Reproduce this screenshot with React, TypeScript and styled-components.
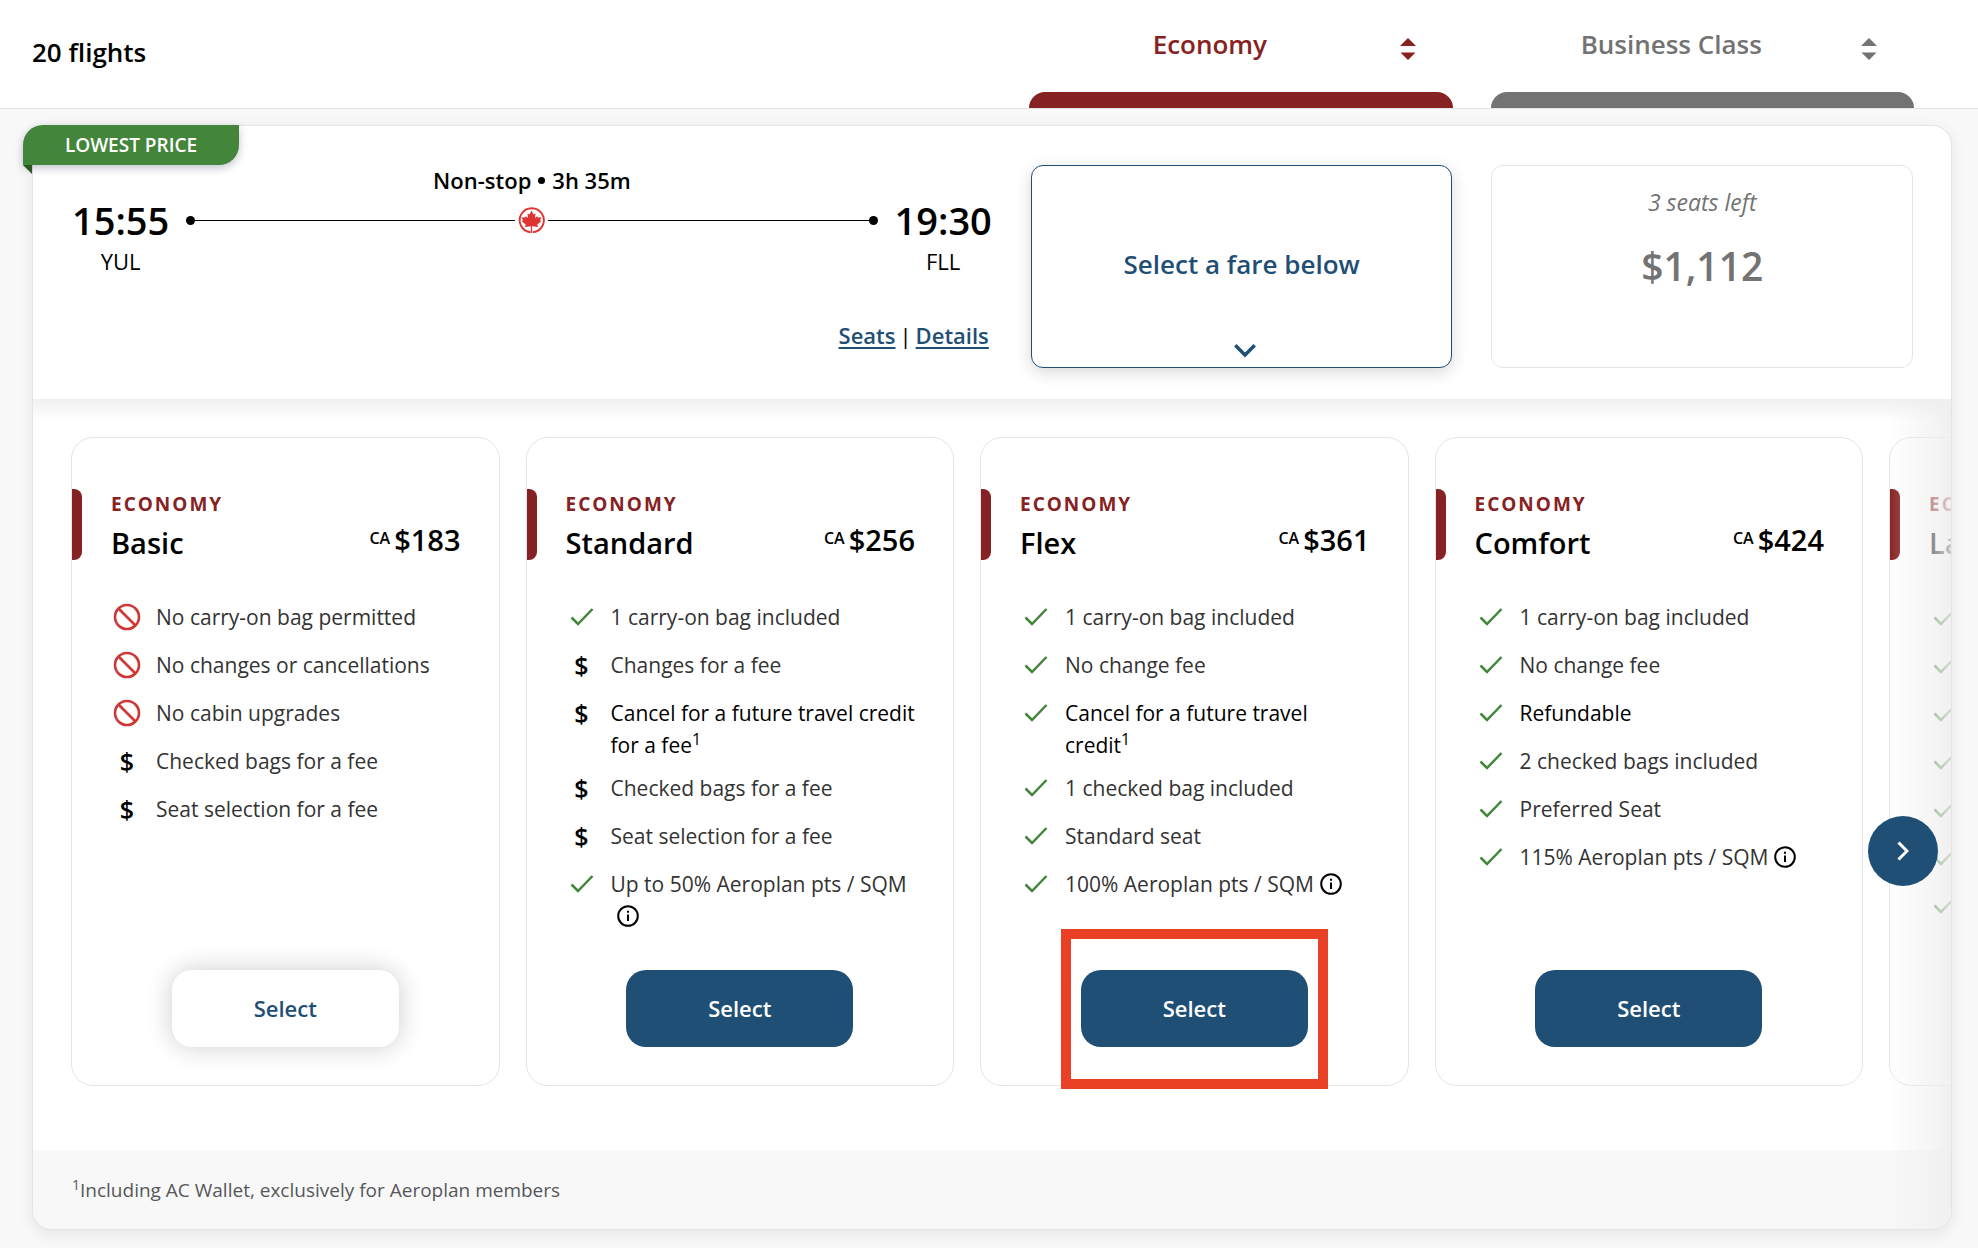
import React from "react";
import styled, { createGlobalStyle } from "styled-components";

const colors = {
  maroon: "#862223",
  navy: "#1f4f75",
  grey: "#737373",
  line: "#e4e4e4",
  page: "#f8f8f8",
  green: "#43853b",
};

const GlobalStyle = createGlobalStyle`
  *, *::before, *::after { box-sizing: border-box; }
  body {
    margin: 0;
    background: ${colors.page};
    color: #000;
    font-family: "Open Sans", "Noto Sans", sans-serif;
    font-size: 21px;
    overflow-x: hidden;
  }
  button { font: inherit; color: inherit; background: none; border: 0; padding: 0; cursor: pointer; }
  h1, h2, p, ul { margin: 0; padding: 0; }
  ul { list-style: none; }
`;

const Header = styled.header`
  display: flex;
  align-items: stretch;
  gap: 38px;
  height: 109px;
  padding: 0 64px 0 32px;
  background: #fff;
  border-bottom: 1px solid ${colors.line};
`;

const Count = styled.h1`
  flex: 1;
  padding-top: 34px;
  font-size: 26px;
  line-height: 36px;
  font-weight: 600;
`;

const CabinTab = styled.button<{ $color: string }>`
  flex: 0 0 22.5%;
  display: flex;
  flex-direction: column;
  justify-content: space-between;
  color: ${(p) => p.$color};

  &::after {
    content: "";
    width: 100%;
    height: 16px;
    border-radius: 16px 16px 0 0;
    background: ${(p) => p.$color};
  }
`;

const TabLabel = styled.span`
  display: flex;
  align-items: center;
  width: 100%;
  padding: 26px 37px 0 0;
  font-size: 26px;
  line-height: 36px;
  font-weight: 600;

  span { flex: 1; text-align: center; padding-right: 9px; }
  svg { margin: 9px 0 0; }
`;

const Panel = styled.section`
  margin: 16px 26px 17px 32px;
  border: 1px solid ${colors.line};
  border-radius: 20px;
  background: #fff;
  box-shadow: 0 4px 16px rgba(0, 0, 0, 0.08);
  position: relative;
`;

const Badge = styled.div`
  position: absolute;
  top: -1px;
  left: -10px;
  width: 216px;
  height: 40px;
  border-radius: 20px 0 20px 0;
  background: ${colors.green};
  color: #fff;
  font-size: 19px;
  line-height: 40px;
  font-weight: 600;
  text-align: center;
  box-shadow: 0 3px 8px rgba(0, 20, 60, 0.25);

  &::after {
    content: "";
    position: absolute;
    left: 0;
    top: 100%;
    border-style: solid;
    border-width: 0 9px 9px 0;
    border-color: transparent #27591f transparent transparent;
  }
`;

const Summary = styled.div`
  display: flex;
  gap: 39px;
  padding: 39px 38px 31px 39px;
`;

const Flight = styled.div`
  flex: 1;
  display: flex;
  flex-direction: column;
  justify-content: space-between;
`;

const Route = styled.div`
  display: flex;
  justify-content: space-between;
  gap: 17px;
`;

const Stop = styled.div`
  padding-top: 29px;
  text-align: center;
`;

const Time = styled.div`
  font-size: 38px;
  line-height: 52px;
  font-weight: 600;
`;

const Airport = styled.div`
  font-size: 22px;
  line-height: 30px;
`;

const Journey = styled.div`
  flex: 1;
`;

const Duration = styled.div`
  display: flex;
  align-items: center;
  justify-content: center;
  gap: 7px;
  font-size: 22px;
  line-height: 30px;
  font-weight: 600;
`;

const Dot = styled.i<{ $size: number }>`
  width: ${(p) => p.$size}px;
  height: ${(p) => p.$size}px;
  border-radius: 50%;
  background: #000;
`;

const Track = styled.div`
  display: flex;
  align-items: center;
  margin-top: 12px;
`;

const Rule = styled.i`
  flex: 1;
  height: 1px;
  background: #000;
`;

const Logo = styled.svg`
  margin: 0 3px;
`;

const Links = styled.div`
  display: flex;
  gap: 4px;
  align-self: flex-end;
  padding: 0 3px 17px 0;
  font-size: 22px;
  line-height: 32px;

  a {
    color: ${colors.navy};
    font-weight: 600;
    text-underline-offset: 3px;
    text-decoration-thickness: 2px;
  }
`;

const FareCell = styled.button<{ $active?: boolean }>`
  flex: 0 0 22.9%;
  height: 203px;
  display: flex;
  flex-direction: column;
  align-items: center;
  border: 1px solid ${(p) => (p.$active ? colors.navy : colors.line)};
  border-radius: 12px;
  color: ${(p) => (p.$active ? colors.navy : colors.grey)};
  background: #fff;
  box-shadow: ${(p) => (p.$active ? "0 4px 16px rgba(0, 0, 0, 0.16)" : "none")};
`;

const FarePrompt = styled.span`
  padding-top: 80px;
  font-size: 26px;
  line-height: 36px;
  font-weight: 600;
`;

const FareChevron = styled.svg`
  margin: auto 0 9px 6px;
`;

const SeatsLeft = styled.span`
  padding-top: 20px;
  font-size: 23px;
  line-height: 32px;
  font-style: italic;
`;

const CabinPrice = styled.span`
  padding-top: 22px;
  font-size: 39px;
  line-height: 52px;
  font-weight: 600;
`;

const Fares = styled.div`
  position: relative;
  border-radius: 0 0 20px 20px;
  overflow: hidden;
`;

const Cards = styled.div`
  display: flex;
  gap: 26px;
  padding: 38px 62px 64px 38px;
  background: linear-gradient(#f0f0f0, #fff 22px);
`;

const Card = styled.article`
  flex: 0 0 calc((100% - 104px) / 4);
  display: flex;
  flex-direction: column;
  height: 649px;
  padding: 51px 0 38px;
  border: 1px solid ${colors.line};
  border-radius: 22px;
  background: #fff;
`;

const CardHead = styled.header`
  display: flex;
  height: 71px;
  padding-right: 38px;

  &::before {
    content: "";
    align-self: stretch;
    width: 10px;
    margin-right: 29px;
    border-radius: 0 8px 8px 0;
    background: ${colors.maroon};
  }
`;

const FareName = styled.div`
  flex: 1;
`;

const Cabin = styled.p`
  font-size: 19px;
  line-height: 30px;
  font-weight: 700;
  letter-spacing: 2px;
  color: ${colors.maroon};
`;

const Fare = styled.h2`
  padding-top: 4px;
  font-size: 29px;
  line-height: 40px;
  font-weight: 600;
`;

const Price = styled.div`
  display: flex;
  align-items: flex-start;
  gap: 4px;
  padding-top: 30px;
  font-size: 29px;
  line-height: 42px;
  font-weight: 600;

  small { font-size: 16px; line-height: 38px; }
`;

const Features = styled.ul`
  display: flex;
  flex-direction: column;
  gap: 11px;
  padding: 41px 35px 0 40px;
`;

const Feature = styled.li<{ $strong?: boolean }>`
  display: grid;
  grid-template-columns: 30px 1fr;
  column-gap: 14px;
  min-height: 37px;
  line-height: 32px;
  color: ${(p) => (p.$strong ? "#000" : "#333")};

  sup { font-size: 16px; line-height: 0; vertical-align: 8px; }
`;

const Mark = styled.span`
  display: flex;
  align-items: center;
  justify-content: center;
  height: 31px;
  font-size: 25px;
  font-weight: 600;
  color: #000;
`;

const InfoButton = styled.button`
  display: inline-flex;
  margin-left: 6px;
  vertical-align: -3px;
  color: #000;
`;

const Action = styled.div`
  position: relative;
  align-self: center;
  margin-top: auto;
`;

const SelectButton = styled.button<{ $plain?: boolean }>`
  display: block;
  width: 227px;
  height: 77px;
  padding-bottom: 2px;
  border-radius: 20px;
  font-size: 22px;
  font-weight: 600;
  background: ${(p) => (p.$plain ? "#fff" : colors.navy)};
  color: ${(p) => (p.$plain ? colors.navy : "#fff")};
  box-shadow: ${(p) => (p.$plain ? "0 0 26px rgba(0, 0, 0, 0.2)" : "none")};
`;

const Highlight = styled.span`
  position: absolute;
  inset: -41px -20px -42px;
  border: 10px solid #ea4025;
  pointer-events: none;
`;

const Footnote = styled.footer`
  height: 79px;
  padding: 24px 39px;
  background: ${colors.page};
  color: #55575b;
  font-size: 19px;
  line-height: 32px;

  sup { font-size: 14px; line-height: 0; }
`;

const EdgeFade = styled.div`
  position: absolute;
  inset: 0 0 0 auto;
  width: 62px;
  background: linear-gradient(to right, rgba(238, 238, 238, 0), rgba(238, 238, 238, 0.84));
  pointer-events: none;
`;

const NextButton = styled.button`
  position: absolute;
  right: 13px;
  top: 417px;
  width: 70px;
  height: 70px;
  display: grid;
  place-items: center;
  border-radius: 50%;
  background: ${colors.navy};
`;

const SortIcon = () => (
  <svg width="16" height="22" viewBox="0 0 16 22" fill="currentColor" aria-hidden="true">
    <path d="M8 0l8 8H0zM8 22l-7.500-7.500h15z" />
  </svg>
);

const Check = () => (
  <svg width="24" height="20" viewBox="0 0 24 20" fill="none" stroke={colors.green} strokeWidth="2.500" aria-hidden="true">
    <path d="M1.500 10.500l6.500 6.500L22.500 2" />
  </svg>
);

const Prohibited = () => (
  <svg width="28" height="28" viewBox="0 0 28 28" fill="none" stroke="#cd3936" strokeWidth="2.600" aria-hidden="true">
    <circle cx="14" cy="14" r="12" />
    <path d="M5.500 5.500l17 17" />
  </svg>
);

const Info = () => (
  <svg width="22" height="22" viewBox="0 0 22 22" fill="none" stroke="currentColor" strokeWidth="2" aria-hidden="true">
    <circle cx="11" cy="11" r="9.800" />
    <path d="M11 9.500v6.500M11 5.800v2" />
  </svg>
);

type Kind = "no" | "fee" | "yes";
interface Item {
  kind: Kind;
  text: string;
  strong?: boolean;
  note?: boolean;
  info?: boolean;
}

const marks: Record<Kind, React.ReactNode> = { no: <Prohibited />, fee: "$", yes: <Check /> };

const fares: { name: string; price: string; plain?: boolean; marked?: boolean; items: Item[] }[] = [
  {
    name: "Basic",
    price: "$183",
    plain: true,
    items: [
      { kind: "no", text: "No carry-on bag permitted" },
      { kind: "no", text: "No changes or cancellations" },
      { kind: "no", text: "No cabin upgrades" },
      { kind: "fee", text: "Checked bags for a fee" },
      { kind: "fee", text: "Seat selection for a fee" },
    ],
  },
  {
    name: "Standard",
    price: "$256",
    items: [
      { kind: "yes", text: "1 carry-on bag included" },
      { kind: "fee", text: "Changes for a fee" },
      { kind: "fee", text: "Cancel for a future travel credit for a fee", strong: true, note: true },
      { kind: "fee", text: "Checked bags for a fee" },
      { kind: "fee", text: "Seat selection for a fee" },
      { kind: "yes", text: "Up to 50% Aeroplan pts / SQM", info: true },
    ],
  },
  {
    name: "Flex",
    price: "$361",
    marked: true,
    items: [
      { kind: "yes", text: "1 carry-on bag included" },
      { kind: "yes", text: "No change fee" },
      { kind: "yes", text: "Cancel for a future travel credit", strong: true, note: true },
      { kind: "yes", text: "1 checked bag included" },
      { kind: "yes", text: "Standard seat" },
      { kind: "yes", text: "100% Aeroplan pts / SQM", info: true },
    ],
  },
  {
    name: "Comfort",
    price: "$424",
    items: [
      { kind: "yes", text: "1 carry-on bag included" },
      { kind: "yes", text: "No change fee" },
      { kind: "yes", text: "Refundable", strong: true },
      { kind: "yes", text: "2 checked bags included" },
      { kind: "yes", text: "Preferred Seat" },
      { kind: "yes", text: "115% Aeroplan pts / SQM", info: true },
    ],
  },
  {
    name: "La",
    price: "",
    items: Array.from({ length: 7 }, () => ({ kind: "yes" as Kind, text: "" })),
  },
];

export default function App() {
  return (
    <>
      <GlobalStyle />
      <Header>
        <Count>20 flights</Count>
        <CabinTab $color={colors.maroon}>
          <TabLabel>
            <span>Economy</span>
            <SortIcon />
          </TabLabel>
        </CabinTab>
        <CabinTab $color={colors.grey}>
          <TabLabel>
            <span>Business Class</span>
            <SortIcon />
          </TabLabel>
        </CabinTab>
      </Header>
      <Panel>
        <Badge>LOWEST PRICE</Badge>
        <Summary>
          <Flight>
            <Route>
              <Stop>
                <Time>15:55</Time>
                <Airport>YUL</Airport>
              </Stop>
              <Journey>
                <Duration>
                  Non-stop <Dot $size={7} /> 3h 35m
                </Duration>
                <Track>
                  <Dot $size={9} />
                  <Rule />
                  <Logo width="27" height="27" viewBox="0 0 26 26" aria-label="Air Canada">
                    <path d="M12 24.300A11.600 11.600 0 1 1 14.500 24.300" fill="none" stroke="#e03432" strokeWidth="1.800" />
                    <path
                      d="M13 3.300l2 3.900 1.900-.9-.5 4.200 1.900-1.700.8 1.400 3.400-.4-1.200 2.900 1.100 1.100-3.800 3 .7 2.500-5.800-.7.300 6.400h-1.600l.3-6.400-5.800.7.700-2.500-3.800-3 1.100-1.100-1.200-2.900 3.400.4.8-1.400 1.900 1.700-.5-4.200 1.900.9z"
                      fill="#e03432"
                    />
                  </Logo>
                  <Rule />
                  <Dot $size={9} />
                </Track>
              </Journey>
              <Stop>
                <Time>19:30</Time>
                <Airport>FLL</Airport>
              </Stop>
            </Route>
            <Links>
              <a href="#seats">Seats</a>
              <span>|</span>
              <a href="#details">Details</a>
            </Links>
          </Flight>
          <FareCell $active>
            <FarePrompt>Select a fare below</FarePrompt>
            <FareChevron width="22" height="14" viewBox="0 0 22 14" fill="none" stroke="currentColor" strokeWidth="3.500" aria-hidden="true">
              <path d="M1.300 1.300L11 11 20.700 1.300" />
            </FareChevron>
          </FareCell>
          <FareCell>
            <SeatsLeft>3 seats left</SeatsLeft>
            <CabinPrice>$1,112</CabinPrice>
          </FareCell>
        </Summary>
        <Fares>
          <Cards>
            {fares.map((fare) => (
              <Card key={fare.name}>
                <CardHead>
                  <FareName>
                    <Cabin>ECONOMY</Cabin>
                    <Fare>{fare.name}</Fare>
                  </FareName>
                  {fare.price && (
                    <Price>
                      <small>CA</small>
                      {fare.price}
                    </Price>
                  )}
                </CardHead>
                <Features>
                  {fare.items.map((item, i) => (
                    <Feature key={i} $strong={item.strong}>
                      <Mark>{marks[item.kind]}</Mark>
                      <span>
                        {item.text}
                        {item.note && <sup>1</sup>}
                        {item.info && (
                          <InfoButton aria-label="More about Aeroplan points">
                            <Info />
                          </InfoButton>
                        )}
                      </span>
                    </Feature>
                  ))}
                </Features>
                {fare.price && (
                  <Action>
                    <SelectButton $plain={fare.plain}>Select</SelectButton>
                    {fare.marked && <Highlight />}
                  </Action>
                )}
              </Card>
            ))}
          </Cards>
          <Footnote>
            <sup>1</sup>Including AC Wallet, exclusively for Aeroplan members
          </Footnote>
          <EdgeFade />
          <NextButton aria-label="Next fares">
            <svg width="12" height="20" viewBox="0 0 12 20" fill="none" stroke="#fff" strokeWidth="3" aria-hidden="true">
              <path d="M1.500 1.500L10 10l-8.500 8.500" />
            </svg>
          </NextButton>
        </Fares>
      </Panel>
    </>
  );
}
